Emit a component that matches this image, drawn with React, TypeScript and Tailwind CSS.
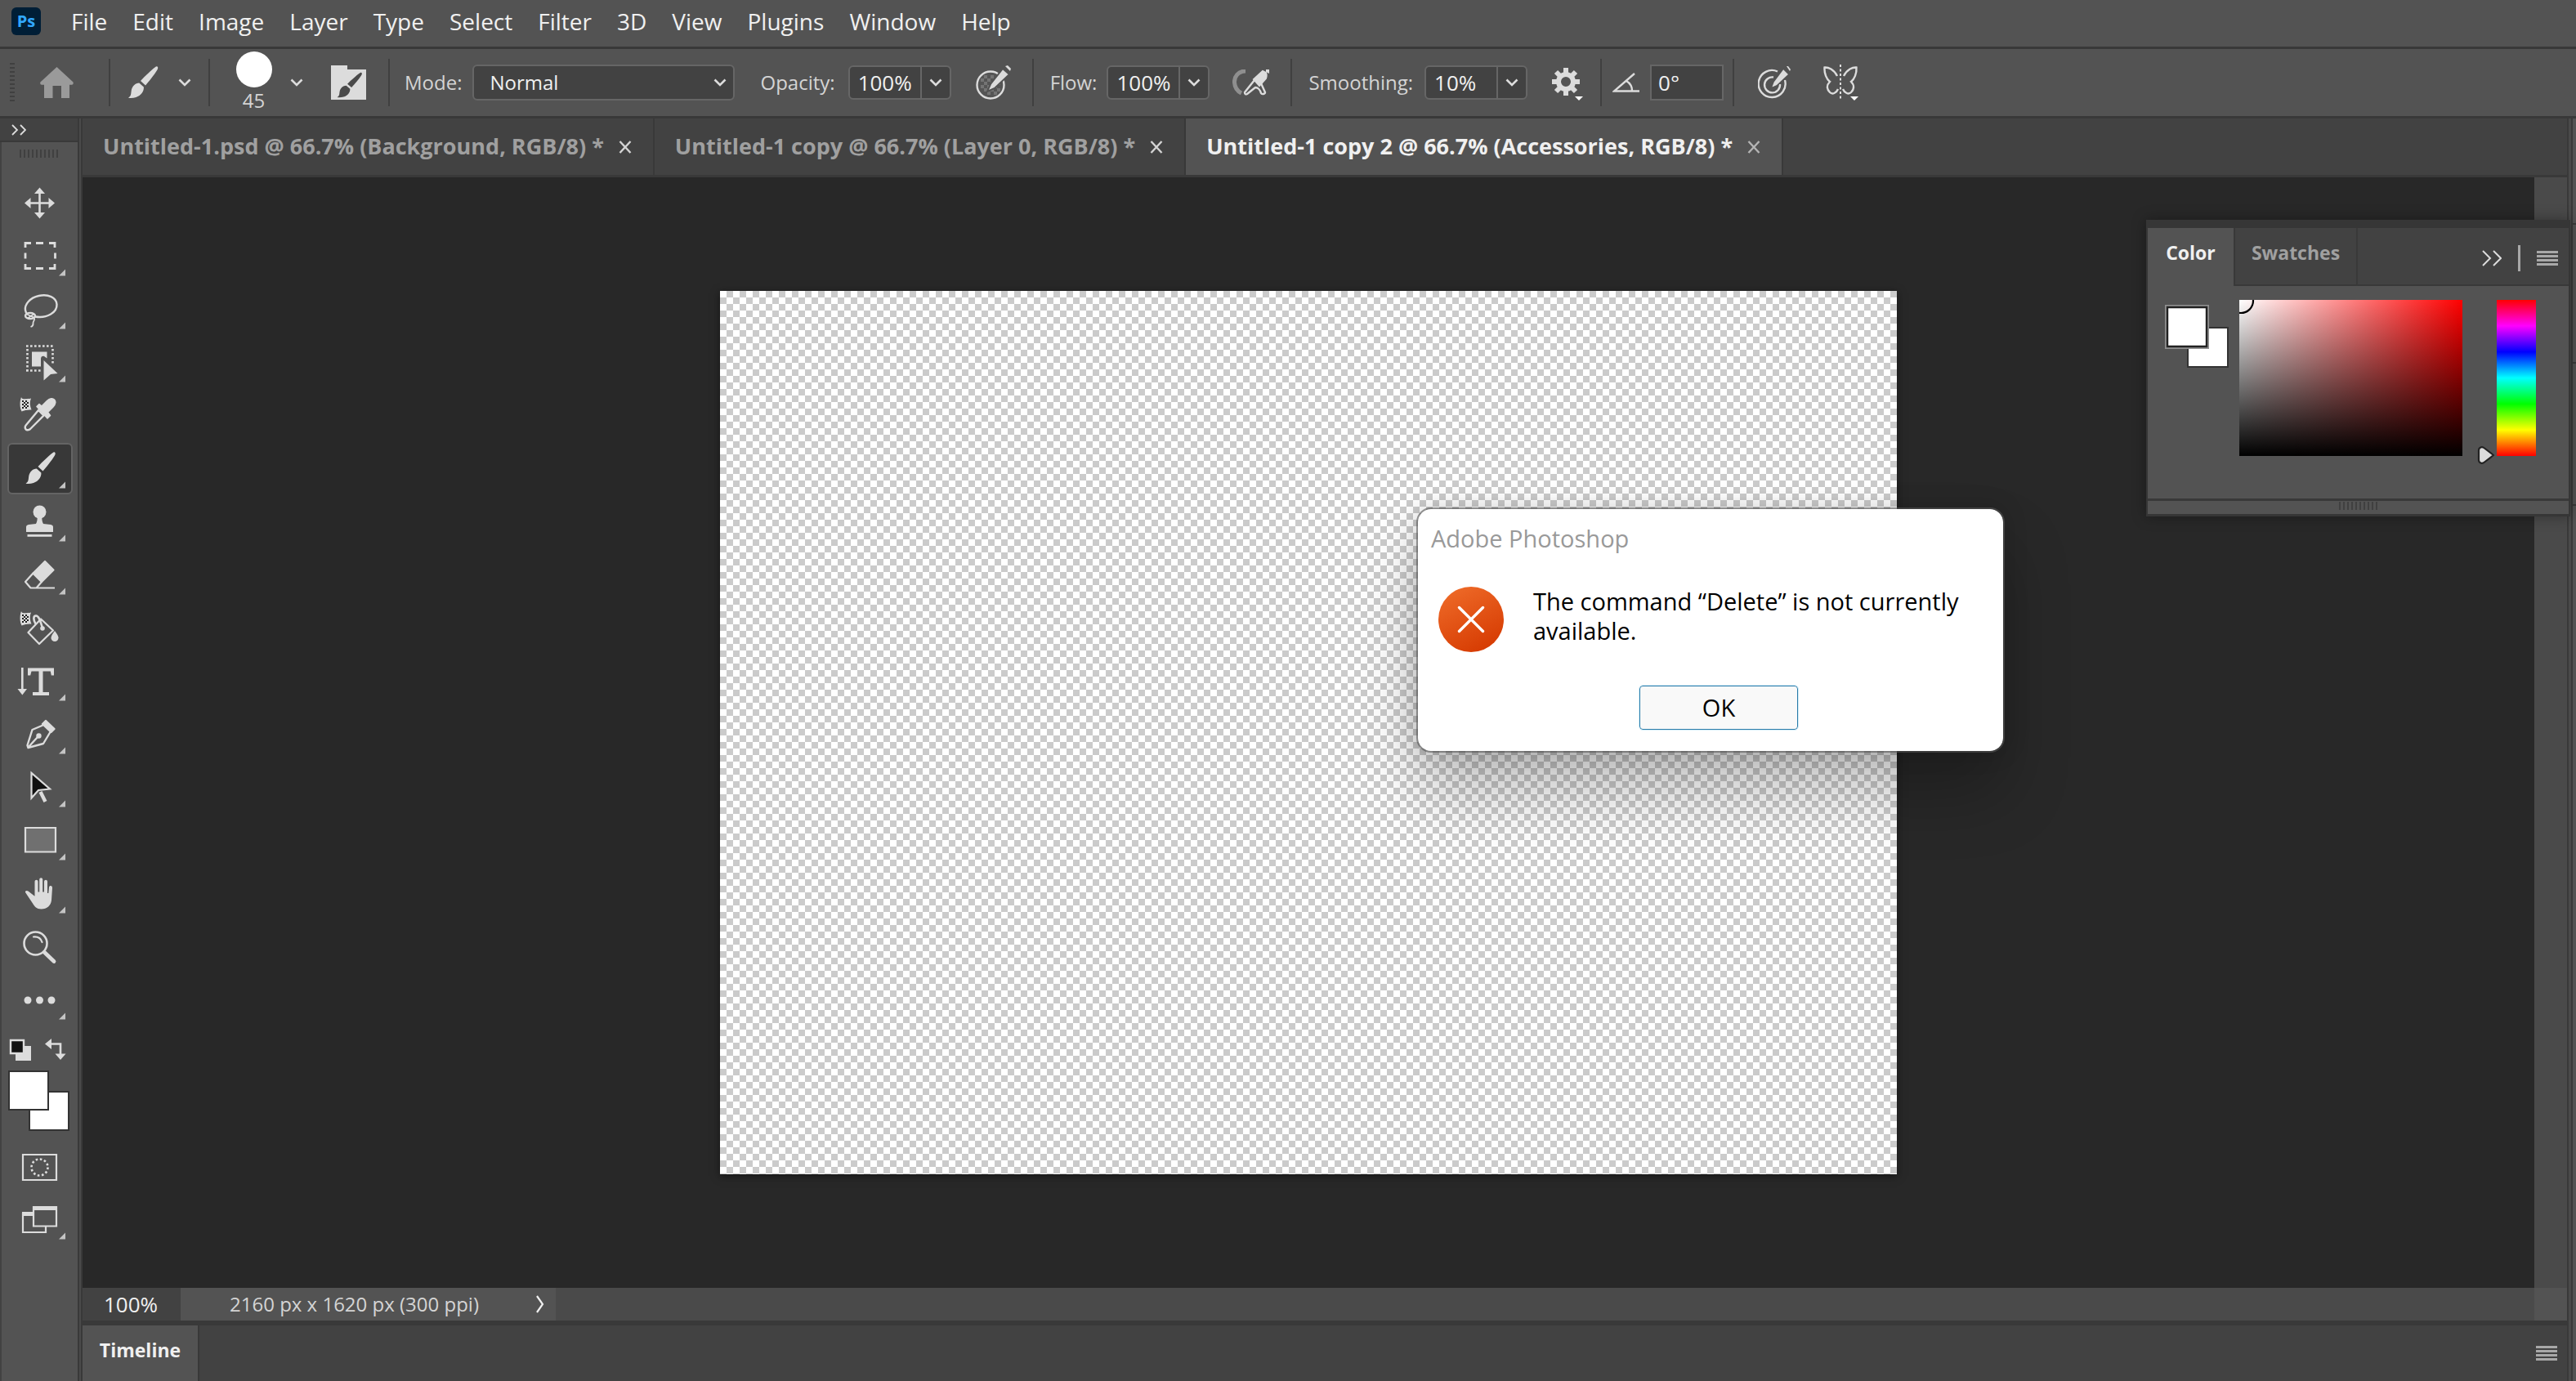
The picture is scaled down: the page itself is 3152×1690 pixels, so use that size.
import { ReactNode, useState } from 'react';

const menus = ['File', 'Edit', 'Image', 'Layer', 'Type', 'Select', 'Filter', '3D', 'View', 'Plugins', 'Window', 'Help'];

const documents = [
	'Untitled-1.psd @ 66.7% (Background, RGB/8) *',
	'Untitled-1 copy @ 66.7% (Layer 0, RGB/8) *',
	'Untitled-1 copy 2 @ 66.7% (Accessories, RGB/8) *',
];

const LIGHT = '#dcdcdc';

/* ---------- small shared icons ---------- */

const Chevron = () => (
	<svg className="w-4 h-[10px] shrink-0" viewBox="0 0 16 10" fill="none" stroke={LIGHT} strokeWidth="2.6">
		<path d="M1.5 1.5 8 8l6.5-6.5" />
	</svg>
);

const DoubleChevron = () => (
	<svg className="w-6 h-5" viewBox="0 0 24 20" fill="none" stroke={LIGHT} strokeWidth="2">
		<path d="M1 1l9 9-9 9M14 1l9 9-9 9" />
	</svg>
);

const Hamburger = () => (
	<svg className="w-[26px] h-[18px]" viewBox="0 0 26 18" fill="#a8a8a8">
		<path d="M0 0h26v3H0zM0 5h26v3H0zM0 10h26v3H0zM0 15h26v3H0z" />
	</svg>
);

const Close = ({ color }: { color: string }) => (
	<svg className="w-4 h-4" viewBox="0 0 16 16" fill="none" stroke={color} strokeWidth="2.4">
		<path d="M1.500 1l13 14M14.500 1l-13 14" />
	</svg>
);

const Grip = () => (
	<svg className="w-12 h-[10px]" viewBox="0 0 48 10" stroke="#404040" strokeWidth="2">
		<path d="M1 0v10M6 0v10M11 0v10M16 0v10M21 0v10M26 0v10M31 0v10M36 0v10M41 0v10M46 0v10" />
	</svg>
);

const Separator = () => <div className="w-[2px] h-[58px] bg-[#404040] shrink-0" />;

const BrushShape = ({ fill }: { fill: string }) => (
	<g fill={fill}>
		<path d="M67 12.500c1.200.8.8 2.600-.4 4.600C63 23 57 30.500 52.500 35.500l-6-5.500C52 24 60 16.500 64 13.500c1.200-.9 2.200-1.400 3-1z" />
		<path d="M44.800 32.500l5.600 5c.4 5.500-3.400 10.500-9.400 12.500-3 1-6.500 1.200-9.500.7 3.600-2.200 3.200-5 3.700-8.700.9-5.500 5-9.500 9.600-9.500z" />
	</g>
);

const Checks = ({ y }: { y: number }) => (
	<g transform={`translate(24 ${y})`}>
		<path d="M2 0c.5 1.800 2 2.500 4.500 2.300C9 2 11 2.200 14 1.500c-2 4.500-1.500 9 .5 14-4.500-.3-8.500.5-12 2-2.500-5-2.500-12-.5-17.500z" fill={LIGHT} />
		<path
			d="M3 4h2v2H3zM7 4h2v2H7zM5 6h2v2H5zM9 6h2v2H9zM3 8h2v2H3zM7 8h2v2H7zM5 10h2v2H5zM9 10h2v2H9zM3 12h2v2H3zM7 12h2v2H7z"
			fill="#222"
		/>
	</g>
);

/* ---------- tool drawings, every one in a 96 x 65 cell ---------- */

type Tool = { name: string; more: boolean; art: ReactNode };

const tools: Tool[] = [
	{
		name: 'Move',
		more: false,
		art: (
			<g fill={LIGHT}>
				<path d="M47.200 18h2.600v29h-2.600zM34 31.200h29v2.600H34z" />
				<path d="M48.500 13.500l6.500 7.500H42zM48.500 51.500L42 44h13zM30 32.500l7.500-6.500v13zM67 32.500L59.500 26v13z" />
			</g>
		),
	},
	{
		name: 'Marquee',
		more: true,
		art: (
			<path
				d="M31 22v-5.500h7M44 16.500h9M60 16.500h7V22M67.500 28.500v7M67 42v5.500h-7M53 47.500h-9M38 47.500h-7V42M31 35.500v-7"
				fill="none"
				stroke={LIGHT}
				strokeWidth="2.800"
			/>
		),
	},
	{
		name: 'Lasso',
		more: true,
		art: (
			<g fill="none" stroke={LIGHT} strokeWidth="2.400">
				<path d="M43 41.500c15 2.500 27-5.500 26.500-15C69 18 59 13.500 47.500 16S30 27 31 33.500c.3 2 1 3.500 2.400 5" />
				<ellipse cx="37" cy="40.500" rx="6" ry="3.600" />
				<path d="M33 38.500l9 4.500c1 3.500-2 4-1.500 7 .2 1.800-1 3.400-3 4M41 38.500l-7 5" strokeWidth="1.800" />
			</g>
		),
	},
	{
		name: 'Object Selection',
		more: true,
		art: (
			<g>
				<path
					d="M32 12.500h34M33.500 16v28M32 42.500h19M64.500 16v18"
					fill="none"
					stroke={LIGHT}
					strokeWidth="2.600"
					strokeDasharray="2.600 2.400"
				/>
				<path d="M39 19.500h18.500v8l-3.500-2.500c-2-.8-4 .5-4 3V37.500H39z" fill={LIGHT} />
				<path d="M53.500 30l17 16-8.500 1-8.500 7.500z" fill={LIGHT} />
			</g>
		),
	},
	{
		name: 'Eyedropper',
		more: false,
		art: (
			<g>
				<Checks y={10} />
				<path d="M47 26l6.500 6.500L37 49c-1.800 1.600-4.500 1.600-5.500.2-1-1.400-.8-3.700.5-5.200z" fill="none" stroke={LIGHT} strokeWidth="2.400" />
				<path
					d="M45 21.500l3-3 3 2.500 6.500-6.500c3.300-3.300 7-3.500 9-1.500s1.800 5.700-1.500 9L58.500 28.500l3 4-3.500 3.500z"
					fill={LIGHT}
					stroke={LIGHT}
					strokeWidth="1.500"
					strokeLinejoin="round"
				/>
			</g>
		),
	},
	{ name: 'Brush', more: true, art: <BrushShape fill={LIGHT} /> },
	{
		name: 'Clone Stamp',
		more: true,
		art: (
			<g fill={LIGHT}>
				<circle cx="48.500" cy="20.500" r="8" />
				<path d="M45.500 26h6c-.6 3.500.3 7 1.500 9l9 1c2 .4 3 1.400 3 3v6H32v-6c0-1.600 1-2.600 3-3l9-1c1.200-2 2.100-5.500 1.500-9z" />
				<path d="M33.500 48h30v2.800h-30z" />
			</g>
		),
	},
	{
		name: 'Eraser',
		more: true,
		art: (
			<g stroke={LIGHT} strokeWidth="2.200" strokeLinejoin="round">
				<path d="M55 16l10.500 10.500L51 41 40.500 30.500z" fill={LIGHT} />
				<path d="M40.500 30.500L51 41l-6.500 7.500h-7L31 41zM44 48.500h23" fill="none" />
			</g>
		),
	},
	{
		name: 'Paint Bucket',
		more: false,
		art: (
			<g>
				<Checks y={12} />
				<g fill="none" stroke={LIGHT} strokeWidth="2.200" strokeLinejoin="round">
					<path d="M50 21.500L65 35.500 48 52 34.500 38z" />
					<path d="M44 28c-4-6-3-10.500 0-10.500 4 0 6 9 8 15" strokeWidth="2.600" />
				</g>
				<circle cx="52" cy="33" r="2.800" fill={LIGHT} />
				<path d="M67 36c3 4 4.500 6.500 4.500 8.500a4.500 4.500 0 0 1-9 0c0-2 1.500-4.500 4.500-8.500z" fill={LIGHT} />
			</g>
		),
	},
	{
		name: 'Vertical Type',
		more: true,
		art: (
			<g fill={LIGHT}>
				<path d="M26 16h2.600v26h4.400L27.300 49.500 21.500 42H26z" />
				<path d="M34 16.500h32v9h-3.200l-1-5H52.500V46H60v4H40v-4h7.500V20.500h-9l-1.300 5H34z" />
			</g>
		),
	},
	{
		name: 'Pen',
		more: true,
		art: (
			<g fill="none" stroke={LIGHT} strokeWidth="2.400" strokeLinejoin="round">
				<path d="M52.500 21.500L39.500 27 33.500 46l1 3L53 44l9-15M34.500 48.500L46 36" />
				<circle cx="47.500" cy="34.500" r="2" fill={LIGHT} />
				<path d="M56 16l10.500 10-4 4L52 20z" fill={LIGHT} />
			</g>
		),
	},
	{
		name: 'Path Selection',
		more: true,
		art: (
			<g stroke={LIGHT}>
				<path d="M49.500 38l6 12" strokeWidth="4.400" />
				<path d="M38.500 15v30.500l8.500-9.500 14-1.500z" fill="#111" strokeWidth="2.200" />
			</g>
		),
	},
	{
		name: 'Rectangle',
		more: true,
		art: <path d="M31 17h37v29.500H31z" fill="#707070" stroke={LIGHT} strokeWidth="2.200" />,
	},
	{
		name: 'Hand',
		more: true,
		art: (
			<path
				d="M31 31c-.5-1.800 1.800-2.800 3.800-1.200l7.700 6V18c0-3 4-3 4 0v12.500h1.700V15.500c0-3 4-3 4 0v15h1.800V18c0-3 4-3 4 0v14h1.300l.7-7c.3-2.800 4.200-2.500 4 .5L63 40.500c-.5 6.500-5.500 11-12.500 11-6 0-8-3-10.500-7z"
				fill={LIGHT}
			/>
		),
	},
	{
		name: 'Zoom',
		more: false,
		art: (
			<g fill="none" stroke={LIGHT} strokeLinecap="round">
				<circle cx="43.500" cy="28.500" r="14" strokeWidth="2.600" />
				<path d="M41 20.500c5-.5 9 2 10.500 6.500" strokeWidth="2.200" />
				<path d="M54.500 39.500l11.500 11" strokeWidth="4.800" />
			</g>
		),
	},
	{
		name: 'Edit Toolbar',
		more: true,
		art: (
			<g fill={LIGHT}>
				<circle cx="34" cy="33" r="4.500" />
				<circle cx="48.500" cy="33" r="4.500" />
				<circle cx="63" cy="33" r="4.500" />
			</g>
		),
	},
];

const ToolCell = ({ tool, active, onClick }: { tool: Tool; active: boolean; onClick: () => void }) => (
	<button aria-label={tool.name} onClick={onClick} className="h-[65px] w-full block">
		<svg className="w-24 h-[65px]" viewBox="0 0 96 65">
			{active && <rect x="10" y="2" width="78" height="61" rx="5" fill="#383838" stroke="#646464" strokeWidth="2" />}
			{tool.art}
			{tool.more && <path d="M80 48.500v8h-8z" fill="#c4c4c4" />}
		</svg>
	</button>
);

/* ---------- options bar ---------- */

const NumberField = ({ id, value }: { id: string; value: string }) => (
	<div className="flex h-[42px] w-[126px] rounded-[6px] border-2 border-[#666] bg-[#424242] overflow-hidden">
		<input id={id} defaultValue={value} className="w-[86px] pl-[10px] bg-transparent text-[26px] text-[#f0f0f0] outline-none" />
		<button aria-label={`${id} slider`} className="flex-1 flex items-center justify-center border-l-2 border-[#666]">
			<Chevron />
		</button>
	</div>
);

const OptionsBar = () => (
	<div className="h-[85px] shrink-0 flex items-center border-b-[3px] border-[#393939] bg-[#535353] text-2xl text-[#d4d4d4]">
		<svg className="w-[6px] h-12 ml-3 mr-[31px]" viewBox="0 0 6 48" stroke="#404040" strokeWidth="2">
			<path d="M0 1h6M0 6h6M0 11h6M0 16h6M0 21h6M0 26h6M0 31h6M0 36h6M0 41h6M0 46h6" />
		</svg>
		<button aria-label="Home" className="mr-[43px]">
			<svg className="w-[41px] h-[38px]" viewBox="0 0 41 38" fill="#9a9a9a">
				<path d="M20.500 0l20 18.500c.6 2-.2 3.200-1.600 3.200H36V38H26V23H15.500v15H5V21.700H2C.6 21.700-.2 20.500.4 18.500z" />
			</svg>
		</button>
		<Separator />
		<button aria-label="Brush tool presets" className="flex items-center gap-6 mx-[21px]">
			<svg className="w-[38px] h-10" viewBox="31 12 37 40">
				<BrushShape fill={LIGHT} />
			</svg>
			<Chevron />
		</button>
		<Separator />
		<button aria-label="Brush size" className="flex items-center gap-[22px] ml-[31px] mr-[34px]">
			<span className="flex flex-col items-center w-[45px]">
				<span className="size-11 rounded-full bg-white" />
				<span className="leading-8">45</span>
			</span>
			<Chevron />
		</button>
		<button aria-label="Brush settings panel" className="mr-[27px]">
			<svg className="w-[43px] h-[42px]" viewBox="0 0 43 42">
				<path d="M0 0h20v5h23v37H0z" fill={LIGHT} />
				<g transform="translate(-19 -1) scale(.84 .79)">
					<BrushShape fill="#4a4a4a" />
				</g>
			</svg>
		</button>
		<Separator />
		<label htmlFor="mode" className="ml-[18px] mr-3">
			Mode:
		</label>
		<div className="grid items-center w-[321px] mr-8">
			<select
				id="mode"
				className="col-start-1 row-start-1 appearance-none h-11 w-full pl-5 rounded-[6px] border-2 border-[#666] bg-[#424242] text-[#f0f0f0]">
				<option>Normal</option>
			</select>
			<span className="col-start-1 row-start-1 justify-self-end mr-[10px] pointer-events-none">
				<Chevron />
			</span>
		</div>
		<label htmlFor="opacity" className="mr-4">
			Opacity:
		</label>
		<NumberField id="opacity" value="100%" />
		<button aria-label="Pressure for opacity" className="ml-[30px] mr-[26px]">
			<svg className="w-[43px] h-[42px]" viewBox="0 0 43 42">
				<circle cx="18" cy="24" r="16.500" fill="#555" stroke={LIGHT} strokeWidth="2.400" />
				<path
					d="M6 16h4v4H6zM14 16h4v4h-4zM22 16h4v4h-4zM10 12h4v4h-4zM18 12h4v4h-4zM10 20h4v4h-4zM18 20h4v4h-4zM26 20h4v4h-4zM6 24h4v4H6zM14 24h4v4h-4zM22 24h4v4h-4zM10 28h4v4h-4zM18 28h4v4h-4zM26 28h4v4h-4zM14 32h4v4h-4zM22 32h4v4h-4z"
					fill="#747474"
				/>
				<path d="M33 4l8 7-18 17-9 4 4-9z" fill={LIGHT} stroke="#535353" strokeWidth="2" />
				<path d="M36 1l3-1 4 4-1 3z" fill={LIGHT} />
			</svg>
		</button>
		<Separator />
		<label htmlFor="flow" className="ml-5 mr-3">
			Flow:
		</label>
		<NumberField id="flow" value="100%" />
		<button aria-label="Airbrush" className="ml-7 mr-[26px]">
			<svg className="w-[45px] h-8" viewBox="0 0 45 32" fill="none">
				<path d="M16 2C7 2 2 9 2.500 16S7 27 11 29" stroke="#8f8f8f" strokeWidth="5" />
				<path d="M26 12l7 8 8-9c1-3 1-5 0-7l-4-2z" fill={LIGHT} stroke={LIGHT} strokeWidth="2" />
				<path d="M27 13L15 28c0 2 1 3 3 2l10-8c3 0 6 3 7 7 1 2 5 1 5-1l-5-11" stroke={LIGHT} strokeWidth="2.400" strokeLinejoin="round" />
				<path d="M41 0h4v5l-4-2z" fill={LIGHT} />
			</svg>
		</button>
		<Separator />
		<label htmlFor="smoothing" className="ml-5 mr-[14px]">
			Smoothing:
		</label>
		<NumberField id="smoothing" value="10%" />
		<button aria-label="Smoothing options" className="ml-[30px] mr-[21px]">
			<svg className="w-[38px] h-11" viewBox="0 0 38 44">
				<g stroke={LIGHT}>
					<circle cx="17" cy="21" r="9" fill="none" strokeWidth="6" />
					<path d="M17 4v7M17 31v7M0 21h7M27 21h7M5 9l5 5M24 28l5 5M5 33l5-5M24 14l5-5" strokeWidth="6" />
				</g>
				<path d="M28 39h10l-5 5z" fill="#fff" />
			</svg>
		</button>
		<Separator />
		<label htmlFor="angle" aria-label="Brush angle" className="mx-[13px]">
			<svg className="w-[33px] h-6" viewBox="0 0 33 24" fill="none" stroke={LIGHT} strokeWidth="2.400">
				<path d="M27 1L2 22.500h31M17 10c5 3 7 7 7 12" />
			</svg>
		</label>
		<input id="angle" defaultValue="0°" className="w-[90px] h-11 pl-2 border-2 border-[#666] bg-[#424242] text-[26px] text-[#f0f0f0] outline-none mr-[11px]" />
		<Separator />
		<button aria-label="Pressure for size" className="ml-[29px] mr-10">
			<svg className="w-10 h-10" viewBox="0 0 40 40" fill="none" stroke={LIGHT} strokeWidth="2.400">
				<path d="M24 6.500A16.500 16.500 0 1 0 33 17" />
				<path d="M19 13.500A9.500 9.500 0 1 0 27 22" />
				<path d="M31 3l7 7-15 14-7 3 3-8z" fill={LIGHT} stroke="#535353" strokeWidth="1.600" />
				<path d="M35 0h2l3 4-1 2z" fill={LIGHT} stroke="none" />
			</svg>
		</button>
		<button aria-label="Symmetry">
			<svg className="w-[43px] h-11" viewBox="0 0 43 44" fill="none" stroke={LIGHT} strokeWidth="2.400">
				<path d="M21 0v44" strokeDasharray="3 2.500" strokeWidth="2" />
				<path d="M17 14C13 6 6 3 1.500 3.500 1 11 4 18 8 21c-5 5-3 10 0 13s8 1 10-4" />
				<path d="M25 14C29 6 36 3 40.500 3.500 41 11 38 18 34 21c5 5 3 10 0 13s-8 1-10-4" />
				<path d="M33 39h10l-5 5z" fill="#fff" stroke="none" />
			</svg>
		</button>
	</div>
);

/* ---------- left toolbar ---------- */

const Toolbar = () => {
	const [active, setActive] = useState<string>('Brush');

	return (
		<aside className="w-[95px] shrink-0 border-l-2 border-[#424242] bg-[#535353]">
			<div className="-ml-[2px]">
				<div className="h-[29px] flex items-center pl-[14px] bg-[#424242] border-b-2 border-[#393939]">
					<svg className="w-[18px] h-[14px]" viewBox="0 0 18 14" fill="none" stroke={LIGHT} strokeWidth="1.800">
						<path d="M1 1l6 6-6 6M11 1l6 6-6 6" />
					</svg>
				</div>
				<div className="h-[42px] pt-[9px] flex items-start justify-center">
					<Grip />
				</div>
				{tools.map((tool) => (
					<ToolCell key={tool.name} tool={tool} active={tool.name === active} onClick={() => setActive(tool.name)} />
				))}
				<button aria-label="Default and swapped colors" className="block h-[50px]">
					<svg className="w-24 h-[50px]" viewBox="0 0 96 50">
						<path d="M19 24h19v18H19z" fill={LIGHT} />
						<path d="M13 17h16v16H13z" fill="#111" stroke={LIGHT} strokeWidth="2.400" />
						<path d="M60 21.500h14v13" fill="none" stroke={LIGHT} strokeWidth="2.600" />
						<path d="M55 21.500l8-6.500v13zM74 41l-6.500-7.500h13z" fill={LIGHT} />
					</svg>
				</button>
				<button aria-label="Foreground and background color" className="block h-[89px]">
					<svg className="w-24 h-[89px]" viewBox="0 0 96 89" fill="#fff" stroke="#333" strokeWidth="2">
						<path d="M36 30h48v47H36z" />
						<path d="M11 5h48v47H11z" />
					</svg>
				</button>
				<button aria-label="Quick mask" className="block h-[65px]">
					<svg className="w-24 h-[65px]" viewBox="0 0 96 65" fill="none" stroke={LIGHT}>
						<path d="M28 18h41v31H28z" strokeWidth="2.200" />
						<circle cx="48.500" cy="33.500" r="10" strokeWidth="2.600" strokeDasharray="2.600 2.636" />
					</svg>
				</button>
				<button aria-label="Screen mode" className="block h-[65px]">
					<svg className="w-24 h-[65px]" viewBox="0 0 96 65" fill="none" stroke={LIGHT} strokeWidth="2.200">
						<path d="M40 25H28v23h28v-7" />
						<path d="M27 23h13v5H27zM40 16h30v5H40z" fill={LIGHT} stroke="none" />
						<path d="M41 17h28v23.500H41z" />
						<path d="M80 48.500v8h-8z" fill="#c4c4c4" stroke="none" />
					</svg>
				</button>
			</div>
		</aside>
	);
};

/* ---------- color panel ---------- */

const ColorPanel = () => (
	<section className="absolute top-[124px] right-[7px] w-[519px] border-2 border-t-[10px] border-b-[3px] border-[#363636] bg-[#535353] shadow-[0_0_16px_rgba(0,0,0,0.35)]">
		<div className="flex h-[71px] bg-[#424242] text-[23px] leading-7 font-bold">
			<button className="w-[107px] pt-4 flex justify-center items-start bg-[#535353] border-r-2 border-[#393939] text-[#f0f0f0]">Color</button>
			<div className="flex-1 flex border-b-2 border-[#393939]">
				<button className="w-[150px] pt-4 flex justify-center items-start border-r-2 border-[#393939] text-[#a0a0a0]">Swatches</button>
				<div className="flex-1 flex items-center justify-end gap-5 pt-1 pr-[13px]">
					<button aria-label="Collapse">
						<DoubleChevron />
					</button>
					<div className="w-[3px] h-8 bg-[#a8a8a8]" />
					<button aria-label="Panel menu">
						<Hamburger />
					</button>
				</div>
			</div>
		</div>
		<div className="flex h-[260px] pt-[17px] pl-[21px]">
			<svg className="w-[78px] h-[84px] mt-[5px] mr-[13px]" viewBox="0 0 78 84">
				<path d="M28 29h49v48H28z" fill="#fff" stroke="#333" strokeWidth="2" />
				<path d="M1 2h52v52H1z" fill="#fff" stroke="#8f8f8f" strokeWidth="2" />
				<path d="M3 4h48v48H3z" fill="none" stroke="#222" strokeWidth="2.400" />
			</svg>
			<div className="w-[273px] h-[191px] overflow-hidden bg-[linear-gradient(to_top,#000,transparent),linear-gradient(to_right,#fff,#f00)]">
				<svg className="w-5 h-5" viewBox="0 0 20 20" fill="none" stroke="#000" strokeWidth="2.200">
					<circle cx="2" cy="1" r="15" />
				</svg>
			</div>
			<svg className="w-[22px] h-6 ml-[18px] mt-[178px]" viewBox="0 0 22 24">
				<path d="M2 6c0-3.500 4-5 7-2.500L20 12 9 20.500C6 23 2 21.500 2 18z" fill={LIGHT} stroke="#222" strokeWidth="2.200" strokeLinejoin="round" />
			</svg>
			<div className="w-12 h-[191px] ml-[2px] bg-[linear-gradient(to_bottom,#f00,#f0f,#00f,#0ff,#0f0,#ff0,#f00)]" />
		</div>
		<div className="h-[19px] flex justify-center border-t-[3px] border-[#393939] pt-[1px]">
			<Grip />
		</div>
	</section>
);

/* ---------- error dialog ---------- */

const AlertDialog = () => (
	<div
		role="alertdialog"
		aria-labelledby="alert-title"
		className="absolute left-[1735px] top-[623px] w-[716px] h-[296px] rounded-[16px] bg-white outline-2 outline-[#555]/60 shadow-[0_50px_80px_rgba(0,0,0,0.25),0_0_30px_rgba(0,0,0,0.18)] text-[29px] leading-9">
		<h2 id="alert-title" className="pl-4 pt-[18px] text-[#999]">
			Adobe Photoshop
		</h2>
		<div className="flex gap-9 pl-[25px] pt-[41px]">
			<svg className="w-20 h-20 shrink-0" viewBox="0 0 80 80">
				<defs>
					<linearGradient id="alert-fill" x1="0.2" y1="0" x2="0.7" y2="1">
						<stop offset="0" stopColor="#ee6a28" />
						<stop offset="1" stopColor="#d63b02" />
					</linearGradient>
				</defs>
				<circle cx="40" cy="40" r="40" fill="url(#alert-fill)" />
				<path d="M25.500 25.500l29 29M54.500 25.500l-29 29" stroke="#fff" strokeWidth="3.400" strokeLinecap="round" />
			</svg>
			<p className="text-black w-[540px]">The command “Delete” is not currently available.</p>
		</div>
		<button className="block mt-[41px] ml-[271px] w-[194px] h-[54px] rounded-[4px] border border-[#2a7ba8] outline outline-[#d4eefa] bg-[#f9f9f9] text-black">OK</button>
	</div>
);

const App = () => {
	const [current, setCurrent] = useState<number>(2);

	return (
		<div className="relative min-h-screen flex flex-col overflow-hidden bg-[#535353] font-['Open_Sans','Noto_Sans',sans-serif]">
			<header className="h-[60px] shrink-0 flex items-center gap-[37px] pl-[14px] pb-[6px] border-b-[3px] border-[#393939]">
				<div className="w-9 h-[34px] rounded-[6px] bg-[#001e36] flex items-center justify-center text-xl font-bold text-[#31a8ff]">Ps</div>
				<nav className="flex gap-[31px] text-[28px] text-[#f0f0f0]">
					{menus.map((menu) => (
						<button key={menu}>{menu}</button>
					))}
				</nav>
			</header>

			<OptionsBar />

			<main className="relative flex-1 flex">
				<Toolbar />
				<div className="w-[6px] shrink-0 border-x-2 border-[#393939] bg-[#4a4a4a]" />

				<div className="flex-1 flex flex-col">
					<div className="h-[72px] shrink-0 flex border-b-[3px] border-[#393939] bg-[#424242] text-[27px] font-bold">
						{documents.map((title, index) => (
							<div
								key={title}
								className={`flex items-center gap-[18px] pl-[25px] pr-[26px] border-r-2 border-[#393939] ${
									index === current ? 'bg-[#535353] text-[#f0f0f0]' : 'text-[#a0a0a0]'
								}`}>
								<button onClick={() => setCurrent(index)}>{title}</button>
								<button aria-label="Close document">
									<Close color={index === current ? '#b4b4b4' : '#d4d4d4'} />
								</button>
							</div>
						))}
					</div>

					<div className="flex-1 flex">
						<div className="flex-1 flex items-center justify-center bg-[#282828]">
							<div className="w-[1440px] h-[1081px] bg-[conic-gradient(#cbcbcb_25%,#fff_0_50%,#cbcbcb_0_75%,#fff_0)] bg-[length:16px_16px] shadow-[0_2px_10px_rgba(0,0,0,0.5)]" />
						</div>
						<div className="w-10 bg-[#4a4a4a]" />
					</div>

					<div className="h-10 shrink-0 flex items-stretch bg-[#4a4a4a] text-2xl leading-10">
						<input aria-label="Zoom level" defaultValue="100%" className="w-[120px] pl-[26px] bg-[#424242] text-[26px] text-[#f0f0f0] outline-none" />
						<div className="w-[459px] pl-[60px] pr-[14px] flex items-center justify-between bg-[#535353] text-[#d4d4d4]">
							<span>2160 px x 1620 px (300 ppi)</span>
							<button aria-label="Document info">
								<svg className="w-[10px] h-[22px]" viewBox="0 0 10 22" fill="none" stroke="#f0f0f0" strokeWidth="2.200">
									<path d="M1 1l7 10-7 10" />
								</svg>
							</button>
						</div>
						<div className="flex-1" />
						<div className="w-10 bg-[#535353]" />
					</div>

					<div className="h-[74px] shrink-0 flex items-stretch justify-between border-t-[6px] border-[#393939] bg-[#424242]">
						<button className="w-[143px] pt-[14px] flex justify-center items-start bg-[#535353] border-r-2 border-[#393939] text-[23px] leading-8 font-bold text-[#f0f0f0]">Timeline</button>
						<button aria-label="Timeline menu" className="mr-3">
							<Hamburger />
						</button>
					</div>
				</div>

				<div className="w-[7px] shrink-0 border-x-2 border-[#393939] bg-[#4a4a4a]" />
				<div className="w-1 shrink-0 flex flex-col bg-[#535353] pt-[128px]">
					<div className="h-[172px] border-y-2 border-[#393939]" />
					<div className="h-[174px] border-b-2 border-[#393939]" />
				</div>

				<ColorPanel />
			</main>

			<AlertDialog />
		</div>
	);
};

export default App;
